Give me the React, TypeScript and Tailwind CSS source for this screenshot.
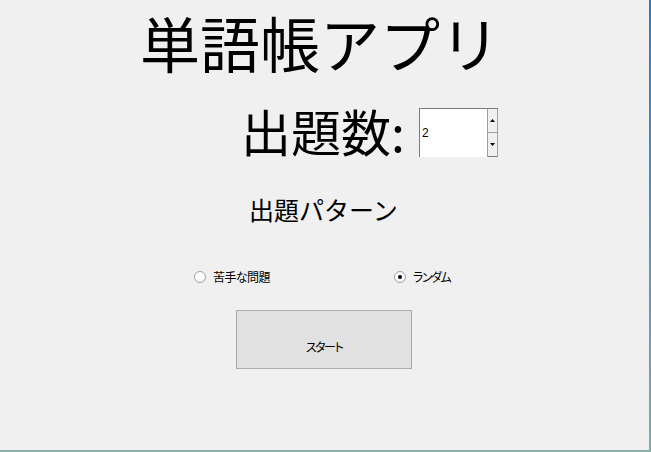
import React from "react";

const jp = { fontFamily: '"Noto Sans CJK JP", "Noto Sans", sans-serif' };
const jpP = { fontFamily: '"Noto Sans CJK JP", "Noto Sans", sans-serif', fontFeatureSettings: '"palt" 1' };

function Radio({ checked, label, tight }: { checked?: boolean; label: string; tight?: boolean }) {
  return (
    <div className="flex items-center">
      <div className="w-[12px] h-[12px] rounded-full border border-[#a3a3a3] bg-[radial-gradient(circle_at_40%_40%,#ffffff_55%,#e4e4e4)] flex items-center justify-center">
        {checked && <div className="w-[4px] h-[4px] rounded-full bg-black" />}
      </div>
      <span
        className={
          tight
            ? "ml-[7px] text-[12px] leading-[12px] text-black whitespace-nowrap tracking-[-1.5px]"
            : "ml-[7px] text-[12px] leading-[12px] text-black whitespace-nowrap tracking-[-0.6px]"
        }
        style={jpP}
      >
        {label}
      </span>
    </div>
  );
}

export default function App() {
  return (
    <div className="relative w-[651px] h-[452px] bg-[#f0f0f0]" style={jp}>
      <div className="flex flex-col h-full">
        <div className="mt-[12px] pl-[140px] h-[60px]">
          <h1 className="block text-[60px] leading-[60px] font-normal text-black whitespace-nowrap">単語帳アプリ</h1>
        </div>

        <div className="mt-[36px] h-[49px] flex items-center">
          <span className="ml-[241px] text-[50px] leading-[49px] text-black whitespace-nowrap relative top-[-2px]">出題数:</span>
          <div className="ml-auto mr-[153px] w-[79px] h-[49px] flex bg-white border-t border-l border-[#7a7a7a]">
            <div className="flex-1 flex items-center pl-[2px]">
              <span className="text-[12px] leading-[12px] text-black" style={{ fontFamily: '"Liberation Sans", sans-serif' }}>
                2
              </span>
            </div>
            <div className="w-[11px] flex flex-col border-l border-r border-[#a0a0a0] bg-[#f0f0f0]">
              <div className="flex-1 flex items-center justify-center border-b border-[#a0a0a0]">
                <svg width="5" height="3" viewBox="0 0 5 3"><path d="M2.5 0 L5 3 L0 3 Z" fill="#000" /></svg>
              </div>
              <div className="flex-1 flex items-center justify-center border-b border-[#7a7a7a]">
                <svg width="5" height="3" viewBox="0 0 5 3"><path d="M0 0 L5 0 L2.5 3 Z" fill="#000" /></svg>
              </div>
            </div>
          </div>
        </div>

        <div className="mt-[40px] h-[25px] flex items-center pl-[249px]">
          <span className="text-[25px] leading-[25px] text-black whitespace-nowrap">出題パターン</span>
        </div>

        <div className="mt-[49px] h-[12px] flex items-center pl-[194px]">
          <div className="w-[200px]">
            <Radio label="苦手な問題" />
          </div>
          <Radio checked tight label="ランダム" />
        </div>

        <div className="mt-[27px] pl-[236px]">
          <button className="w-[176px] h-[59px] bg-[#e1e1e1] border border-[#adadad] flex items-center justify-center pt-[14px]">
            <span className="text-[12px] leading-[12px] text-black tracking-[-1.5px]" style={jpP}>スタート</span>
          </button>
        </div>
      </div>

      <div className="absolute top-0 right-0 w-[2px] h-full bg-[linear-gradient(to_bottom,#2b7bc6,#5f97b6_60%,#82aba7)]" />
      <div className="absolute bottom-0 left-0 w-full h-[2px] bg-[#8aaeab]" />
    </div>
  );
}
